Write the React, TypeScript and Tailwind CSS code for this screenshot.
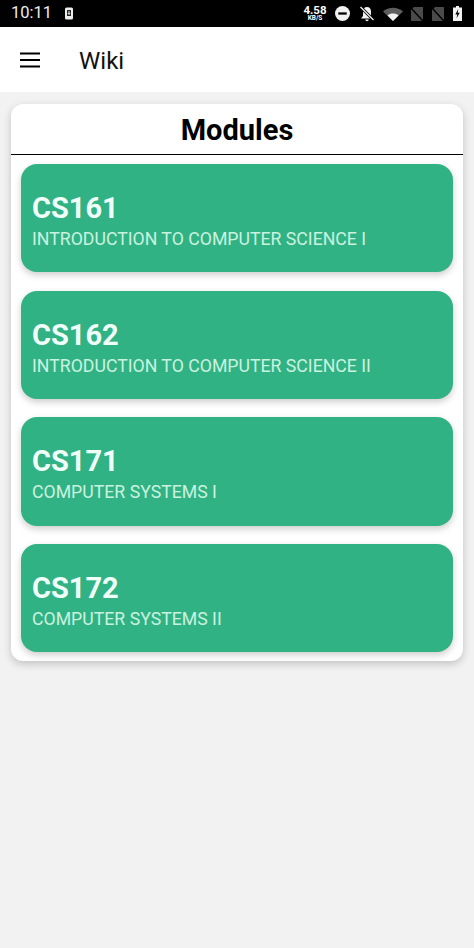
const modules = [
  { code: 'CS161', name: 'INTRODUCTION TO COMPUTER SCIENCE I' },
  { code: 'CS162', name: 'INTRODUCTION TO COMPUTER SCIENCE II' },
  { code: 'CS171', name: 'COMPUTER SYSTEMS I' },
  { code: 'CS172', name: 'COMPUTER SYSTEMS II' },
];

function StatusBar() {
  return (
    <div className="h-[27px] bg-black flex items-center justify-between pl-[11px] pr-[12px] text-white">
      <div className="flex items-center gap-[12px]">
        <span className="text-[16.5px] leading-none text-[#eeeeee]">10:11</span>
        <svg width="10" height="13" viewBox="0 0 10 13">
          <rect x="1" y="0.5" width="8" height="12" rx="1.5" fill="#eee" />
          <rect x="3" y="3" width="4" height="6" fill="#222" />
          <path d="M5 4v3M3.8 6L5 7.5 6.2 6" stroke="#eee" strokeWidth="1" fill="none" />
        </svg>
      </div>
      <div className="flex items-center">
        <div className="flex flex-col items-center w-[22px] font-bold mr-[9px]">
          <span className="text-[11.5px] leading-[10px]">4.58</span>
          <span className="text-[6.5px] leading-[7px]">KB/S</span>
        </div>
        {/* do not disturb */}
        <svg width="15" height="15" viewBox="0 0 16 16" className="mr-[9px]">
          <circle cx="8" cy="8" r="8" fill="#f2f2f2" />
          <rect x="3.5" y="6.8" width="9" height="2.4" fill="#000" />
        </svg>
        {/* bell off */}
        <svg width="16" height="16" viewBox="0 0 16 16" className="mr-[8px]">
          <path d="M8 1c-2.600 0-4 2-4 4.500v4.500L2 12.500h12L12 10V5.500C12 3 10.600 1 8 1z" fill="#f2f2f2" />
          <path d="M6.300 13.500h3.400a1.700 1.700 0 0 1-3.400 0z" fill="#f2f2f2" />
          <path d="M1.500 1l13 13" stroke="#000" strokeWidth="3" />
          <path d="M1.500 1l13 13" stroke="#f2f2f2" strokeWidth="1.300" />
        </svg>
        {/* wifi */}
        <svg width="20" height="14" viewBox="0 0 20 14" className="mr-[8px]">
          <path d="M0 4.500C5.500-0.500 14.500-0.500 20 4.500L10 14z" fill="#5e5e5e" />
          <path d="M4.500 8.500c3-2.600 8-2.600 11 0L10 14z" fill="#f2f2f2" />
        </svg>
        {/* sim slots */}
        <svg width="12" height="14" viewBox="0 0 12 14" className="mr-[9px]">
          <path d="M0 14V3L3 0H12v14z" fill="#4a4a4a" />
          <path d="M0 1l12 13" stroke="#000" strokeWidth="1.500" />
        </svg>
        <svg width="12" height="14" viewBox="0 0 12 14" className="mr-[9px]">
          <path d="M0 14V3L3 0H12v14z" fill="#4a4a4a" />
          <path d="M0 1l12 13" stroke="#000" strokeWidth="1.500" />
        </svg>
        {/* battery charging */}
        <svg width="9" height="15" viewBox="0 0 9 15">
          <path d="M3 0h3v1.500h3V15H0V1.500h3z" fill="#f2f2f2" />
          <path d="M5.200 3L2.300 8.500h2L3.500 12.500 6.700 6.800h-2z" fill="#000" />
        </svg>
      </div>
    </div>
  );
}

export default function App() {
  return (
    <div className="min-h-[948px] bg-[#f2f2f2] font-['Roboto',sans-serif]">
      <StatusBar />
      <div className="h-[65px] bg-white flex items-center pl-[20px]">
        <svg width="20" height="16" viewBox="0 0 20 16">
          <path d="M0 1.500h20M0 8h20M0 14.500h20" stroke="#000" strokeWidth="2" />
        </svg>
        <span className="ml-[39px] mt-[3px] text-[24px] leading-none text-[#111111]">Wiki</span>
      </div>
      <div className="px-[11px] pt-[12px]">
        <div className="bg-white rounded-[12px] shadow-[0_3px_8px_rgba(0,0,0,0.2)] pb-[9px]">
          <div className="h-[51px] border-b border-black flex items-center justify-center">
            <span className="mt-[2px] text-[29px] font-bold leading-none text-black">Modules</span>
          </div>
          <div className="px-[10px] pt-[9px] flex flex-col gap-[18.33px]">
            {modules.map((m) => (
              <div
                key={m.code}
                className="h-[108.33px] rounded-[16px] bg-[#31b285] shadow-[0_3px_7px_rgba(0,0,0,0.2)] pl-[11px] pt-[27px]"
              >
                <div className="text-[29px] font-bold leading-[34px] text-[#f0fff8]">{m.code}</div>
                <div className="mt-[3px] text-[17.7px] leading-[22px] text-[#c9f2df]">{m.name}</div>
              </div>
            ))}
          </div>
        </div>
      </div>
    </div>
  );
}
